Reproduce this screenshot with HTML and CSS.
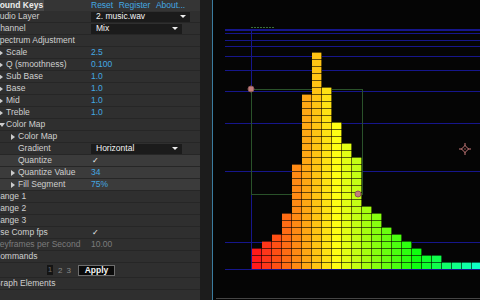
FILE: index.html
```html
<!DOCTYPE html>
<html lang="en">
  <head>
    <meta charset="utf-8" />
    <title>Sound Keys</title>
    <link rel="stylesheet" href="styles.css">
  </head>
  <body>
    <div class="app">
      <aside class="panel">
        <div class="head">
          <div class="title"><span class="tab">Sound Keys</span></div>
          <nav class="links"><a>Reset</a><a>Register</a><a>About...</a></nav>
        </div>
        <div class="row"><span class="name l0">Audio Layer</span><span class="drop wide">2. music.wav</span></div>
        <div class="row"><span class="name l0">Channel</span><span class="drop">Mix</span></div>
        <div class="row"><span class="name l0">Spectrum Adjustment</span></div>
        <div class="row"><span class="name l1"><i class="twirl"></i>Scale</span><span class="num">2.5</span></div>
        <div class="row"><span class="name l1"><i class="twirl"></i>Q (smoothness)</span><span class="num">0.100</span></div>
        <div class="row"><span class="name l1"><i class="twirl"></i>Sub Base</span><span class="num">1.0</span></div>
        <div class="row"><span class="name l1"><i class="twirl"></i>Base</span><span class="num">1.0</span></div>
        <div class="row"><span class="name l1"><i class="twirl"></i>Mid</span><span class="num">1.0</span></div>
        <div class="row"><span class="name l1"><i class="twirl"></i>Treble</span><span class="num">1.0</span></div>
        <div class="row"><span class="name l1"><i class="twirl open"></i>Color Map</span></div>
        <div class="row"><span class="name l2"><i class="twirl"></i>Color Map</span></div>
        <div class="row"><span class="name l3">Gradient</span><span class="drop">Horizontal</span></div>
        <div class="row hl"><span class="name l3">Quantize</span><span class="check">✓</span></div>
        <div class="row hl"><span class="name l2"><i class="twirl"></i>Quantize Value</span><span class="num">34</span></div>
        <div class="row hl"><span class="name l2"><i class="twirl"></i>Fill Segment</span><span class="num">75%</span></div>
        <div class="row"><span class="name l0">Range 1</span></div>
        <div class="row"><span class="name l0">Range 2</span></div>
        <div class="row"><span class="name l0">Range 3</span></div>
        <div class="row"><span class="name l0">Use Comp fps</span><span class="check">✓</span></div>
        <div class="row off"><span class="name l0">Keyframes per Second</span><span>10.00</span></div>
        <div class="row"><span class="name l0">Commands</span></div>
        <div class="row cmd">
          <span class="pages"><b>1</b><span>2</span><span>3</span></span>
          <button class="apply">Apply</button>
        </div>
        <div class="row"><span class="name l0">Graph Elements</span></div>
      </aside>
      <div class="gutter"></div>
      <div class="edge"></div>
      <div class="canvas">
        <svg class="layer" width="267" height="300">
          <g fill="#16168c">
            <rect x="12" y="29" width="255" height="2" />
            <rect x="12" y="33" width="255" height="1" />
            <rect x="12" y="40" width="255" height="1" />
            <rect x="12" y="46" width="255" height="1" />
            <rect x="12" y="56" width="255" height="1" />
            <rect x="12" y="70" width="255" height="1" />
            <rect x="12" y="91" width="255" height="1" />
            <rect x="12" y="123" width="255" height="1" />
            <rect x="12" y="171" width="255" height="1" />
            <rect x="12" y="242" width="255" height="1" />
            <rect x="12" y="269" width="255" height="1" />
            <rect x="38" y="29" width="1" height="240" />
          </g>
          <line x1="38" y1="27.5" x2="61" y2="27.5" stroke="#3a6e3a" stroke-dasharray="2 1" />
          <rect x="38.5" y="89.5" width="111" height="105" fill="none" stroke="#2a522a" />
          <rect x="3" y="298" width="264" height="1" fill="#454545" />
        </svg>
        <div class="bars">
          <div class="bar" style="height:21px;background-color:hsl(0,100%,55%)"></div>
          <div class="bar" style="height:28px;background-color:hsl(7.5,100%,55%)"></div>
          <div class="bar" style="height:35px;background-color:hsl(15,100%,54%)"></div>
          <div class="bar" style="height:56px;background-color:hsl(22.5,100%,54%)"></div>
          <div class="bar" style="height:105px;background-color:hsl(30,100%,54%)"></div>
          <div class="bar" style="height:175px;background-color:hsl(37.5,100%,54%)"></div>
          <div class="bar" style="height:217px;background-color:hsl(45,100%,54%)"></div>
          <div class="bar" style="height:182px;background-color:hsl(52.5,100%,54%)"></div>
          <div class="bar" style="height:147px;background-color:hsl(60,100%,54%)"></div>
          <div class="bar" style="height:126px;background-color:hsl(67.5,100%,54%)"></div>
          <div class="bar" style="height:112px;background-color:hsl(75,100%,54%)"></div>
          <div class="bar" style="height:63px;background-color:hsl(82.5,100%,53%)"></div>
          <div class="bar" style="height:56px;background-color:hsl(90,100%,53%)"></div>
          <div class="bar" style="height:42px;background-color:hsl(97.5,100%,53%)"></div>
          <div class="bar" style="height:35px;background-color:hsl(105,100%,53%)"></div>
          <div class="bar" style="height:28px;background-color:hsl(112.5,100%,53%)"></div>
          <div class="bar" style="height:21px;background-color:hsl(120,100%,53%)"></div>
          <div class="bar" style="height:14px;background-color:hsl(127.5,100%,53%)"></div>
          <div class="bar" style="height:14px;background-color:hsl(135,100%,53%)"></div>
          <div class="bar" style="height:7px;background-color:hsl(142.5,100%,53%)"></div>
          <div class="bar" style="height:7px;background-color:hsl(150,100%,53%)"></div>
          <div class="bar" style="height:7px;background-color:hsl(157.5,100%,53%)"></div>
          <div class="bar" style="height:7px;background-color:hsl(165,100%,53%)"></div>
        </div>
        <svg class="layer" width="267" height="300">
          <circle cx="38" cy="89" r="3" fill="#c27c7c" stroke="#8a5656" />
          <circle cx="145" cy="194" r="3" fill="#c27c7c" stroke="#8a5656" />
          <g stroke="#c87a7a" fill="none">
            <path d="M252 145.5 L255.5 149 L252 152.5 L248.5 149 Z" />
            <path d="M252 143v3 M252 152v3 M246 149h3 M255 149h3" />
          </g>
          <rect x="251" y="148" width="2" height="2" fill="#4a2a2a" />
        </svg>
      </div>
    </div>
  </body>
</html>
```

FILE: styles.css
```css
html {
  box-sizing: border-box;
}
*,
*::before,
*::after {
  box-sizing: inherit;
}
body {
  margin: 0;
  background: #050505;
  font-family: "Liberation Sans", Arial, sans-serif;
  font-size: 8.5px;
  color: #cfcfcf;
}
.app {
  display: flex;
  width: 480px;
  height: 300px;
  overflow: hidden;
}
.panel {
  flex: none;
  width: 200px;
  background: #2f2f2f;
  overflow: hidden;
}
.gutter {
  flex: none;
  width: 12px;
  background: #1c1c1c;
}
.edge {
  flex: none;
  width: 1px;
  background: #3b7c9e;
}
.canvas {
  position: relative;
  flex: 1;
  background: #050505;
  overflow: hidden;
}
.layer {
  position: absolute;
  top: 0;
  left: 0;
}

/* effect controls */
.head {
  display: flex;
  height: 11px;
  line-height: 11px;
  background: #353535;
}
.title {
  flex: none;
  width: 97px;
  margin-left: -6px;
}
.tab {
  display: inline-block;
  padding-right: 1px;
  background: #484848;
  color: #ececec;
  font-weight: bold;
}
.links {
  display: flex;
  gap: 5.5px;
}
.links a {
  color: #44a8e2;
}
.row {
  display: flex;
  align-items: center;
  height: 12px;
  line-height: 11px;
  border-bottom: 1px solid #262626;
  white-space: nowrap;
}
.row.hl {
  background: #3b3b3b;
}
.row.off {
  color: #7c7c7c;
}
.name {
  flex: none;
  display: flex;
  align-items: center;
  width: 91px;
}
.l0 {
  width: 97px;
  margin-left: -6px;
}
.l1 {
  width: 92px;
  margin-left: -1px;
}
.l2 {
  padding-left: 11px;
}
.l3 {
  padding-left: 18px;
}
.twirl {
  flex: none;
  width: 0;
  height: 0;
  margin-right: 3px;
  border-left: 4px solid #cccccc;
  border-top: 3px solid transparent;
  border-bottom: 3px solid transparent;
}
.twirl.open {
  margin-right: 1px;
  border-top: 4px solid #cccccc;
  border-left: 3px solid transparent;
  border-right: 3px solid transparent;
  border-bottom: 0;
}
.num {
  color: #44a8e2;
}
.drop {
  display: flex;
  align-items: center;
  justify-content: space-between;
  width: 91px;
  height: 10px;
  padding: 0 4px 0 5px;
  background: #1b1b1b;
  color: #f4f4f4;
}
.drop.wide {
  width: 99px;
}
.drop::after {
  content: "";
  border-top: 3px solid #eeeeee;
  border-left: 3px solid transparent;
  border-right: 3px solid transparent;
}
.check {
  margin-left: 1px;
  font-family: "DejaVu Sans", sans-serif;
  font-size: 8px;
  color: #f0f0f0;
}
.cmd {
  height: 15px;
  padding-left: 47px;
}
.pages {
  display: flex;
  align-items: center;
  width: 31px;
  color: #8a8a8a;
  font-size: 8px;
}
.pages b {
  width: 6px;
  height: 10px;
  margin-right: 5px;
  background: #141414;
  color: #6a6a6a;
  font-weight: normal;
  text-align: center;
  line-height: 10px;
}
.pages span {
  margin-right: 4px;
}
.apply {
  width: 37px;
  height: 11px;
  padding: 0;
  border: 1px solid #6e6e6e;
  background: #0a0a0a;
  color: #f4f4f4;
  font: bold 8.5px "Liberation Sans", Arial, sans-serif;
  line-height: 9px;
}

/* spectrum graph */
.bars {
  position: absolute;
  left: 39px;
  top: 0;
  height: 269px;
  display: flex;
  align-items: flex-end;
}
.bar {
  flex: none;
  width: 10px;
  background-image: linear-gradient(to right, transparent 9px, rgba(0, 0, 0, 0.6) 9px),
    repeating-linear-gradient(to bottom, rgba(0, 0, 0, 0.6) 0 1px, transparent 1px 7px);
}
```
